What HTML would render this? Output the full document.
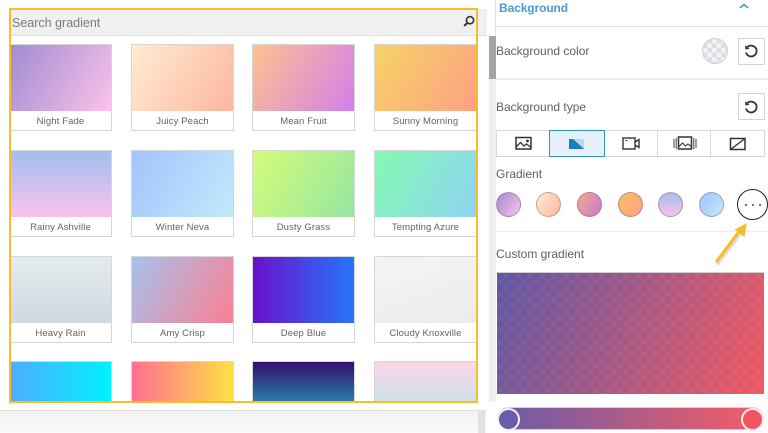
<!DOCTYPE html>
<html><head><meta charset="utf-8">
<style>
html,body{margin:0;padding:0;background:#fff}
body{width:768px;height:433px;position:relative;overflow:hidden;font-family:"Liberation Sans",sans-serif;color:#555}
.a{position:absolute}
.card{position:absolute;width:101px;height:85px;border:1px solid #d6d6d6;box-sizing:content-box;background:#fff}
.card .g{position:absolute;left:0;top:0;right:0;height:66px}
.card .l{position:absolute;left:0;right:0;top:66px;height:19px;line-height:21px;text-align:center;font-size:9.5px;letter-spacing:.12px;color:#636363}
.t{position:absolute;font-size:12px;color:#5f5f5f;letter-spacing:0;white-space:nowrap}
.dot{position:absolute;width:25px;height:25px;border-radius:50%;top:192px;box-sizing:border-box;border:1px solid rgba(120,100,110,.45)}
.rb{position:absolute;left:738px;width:27px;height:27px;box-sizing:border-box;border:1px solid #d4d4d4;background:#fff}
.tab{position:absolute;top:130px;height:27px;box-sizing:border-box}
</style></head><body>

<div class="a" style="left:10px;top:9px;width:477px;height:27px;background:#f0f0f0;border-bottom:1px solid #e2e2e2;box-sizing:border-box"></div>
<div class="a" style="left:12px;top:16px;font-size:12.5px;color:#7b7b7f">Search gradient</div>
<svg class="a" style="left:462px;top:14px" width="14" height="14" viewBox="0 0 14 14"><circle cx="8" cy="6.2" r="3.6" fill="none" stroke="#333" stroke-width="1.6"/><path d="M5.2 9L2.2 12" stroke="#333" stroke-width="2"/></svg>

<div class="card" style="left:9px;top:44px"><div class="g" style="background:linear-gradient(120deg,#a18cd1,#fbc2eb)"></div><div class="l">Night Fade</div></div>
<div class="card" style="left:131px;top:44px"><div class="g" style="background:linear-gradient(120deg,#ffecd2,#fcb69f)"></div><div class="l">Juicy Peach</div></div>
<div class="card" style="left:252px;top:44px"><div class="g" style="background:linear-gradient(120deg,#fcc28e,#d57eeb)"></div><div class="l">Mean Fruit</div></div>
<div class="card" style="left:374px;top:44px"><div class="g" style="background:linear-gradient(120deg,#f6d365,#fda085)"></div><div class="l">Sunny Morning</div></div>

<div class="card" style="left:9px;top:150px"><div class="g" style="background:linear-gradient(180deg,#a1bfef,#fbc2eb)"></div><div class="l">Rainy Ashville</div></div>
<div class="card" style="left:131px;top:150px"><div class="g" style="background:linear-gradient(120deg,#a1c4fd,#c2e9fb)"></div><div class="l">Winter Neva</div></div>
<div class="card" style="left:252px;top:150px"><div class="g" style="background:linear-gradient(120deg,#d4fc79,#96e6a1)"></div><div class="l">Dusty Grass</div></div>
<div class="card" style="left:374px;top:150px"><div class="g" style="background:linear-gradient(120deg,#84fab0,#8fd3f4)"></div><div class="l">Tempting Azure</div></div>

<div class="card" style="left:9px;top:256px"><div class="g" style="background:linear-gradient(180deg,#e4ebee,#cfd9df)"></div><div class="l">Heavy Rain</div></div>
<div class="card" style="left:131px;top:256px"><div class="g" style="background:linear-gradient(120deg,#a6c1ee,#fb8090)"></div><div class="l">Amy Crisp</div></div>
<div class="card" style="left:252px;top:256px"><div class="g" style="background:linear-gradient(90deg,#6a11cb,#2575fc)"></div><div class="l">Deep Blue</div></div>
<div class="card" style="left:374px;top:256px"><div class="g" style="background:linear-gradient(160deg,#f6f3f4,#ececec)"></div><div class="l">Cloudy Knoxville</div></div>

<div class="a" style="left:9px;top:361px;width:103px;height:42px;background:linear-gradient(90deg,#4facfe,#00f2fe);border:1px solid #d6d6d6;border-bottom:0;box-sizing:border-box"></div>
<div class="a" style="left:131px;top:361px;width:103px;height:42px;background:linear-gradient(90deg,#ff6f95,#fee140);border:1px solid #d6d6d6;border-bottom:0;box-sizing:border-box"></div>
<div class="a" style="left:252px;top:361px;width:103px;height:42px;background:linear-gradient(180deg,#30106e,#2b80a8);border:1px solid #d6d6d6;border-bottom:0;box-sizing:border-box"></div>
<div class="a" style="left:374px;top:361px;width:103px;height:42px;background:linear-gradient(180deg,#fdd6e6,#c9e2ea);border:1px solid #d6d6d6;border-bottom:0;box-sizing:border-box"></div>

<div class="a" style="left:478px;top:36px;width:11px;height:374px;background:#fff"></div>
<div class="a" style="left:9px;top:8px;width:469px;height:395px;border:2px solid #fbbc27;box-sizing:border-box"></div>

<div class="a" style="left:0;top:410px;width:486px;height:23px;background:linear-gradient(180deg,#f1f1f1,#fafafa);border-top:1px solid #dedede;box-sizing:border-box"></div>
<div class="a" style="left:478px;top:411px;width:7px;height:22px;background:#e2e2e2"></div>

<div class="a" style="left:495px;top:0;width:1px;height:36px;background:#e4e4e4"></div>
<div class="a" style="left:489px;top:36px;width:7px;height:366px;background:#efefef"></div>
<div class="a" style="left:489px;top:36px;width:7px;height:43px;background:#a4a4a4"></div>

<div class="t" style="left:499px;top:1px;font-weight:bold;color:#4a9bd0;letter-spacing:-.1px">Background</div>
<svg class="a" style="left:738px;top:2px" width="12" height="8" viewBox="0 0 12 8"><path d="M2 6L6 2.5L10 6" fill="none" stroke="#3d93cc" stroke-width="1.5"/></svg>
<div class="a" style="left:496px;top:26px;width:272px;height:1px;background:#e3e3e3"></div>

<div class="t" style="left:496px;top:44px">Background color</div>
<div class="a" style="left:702px;top:38px;width:26px;height:26px;border-radius:50%;border:1px solid #d0d0d0;box-sizing:border-box;background:repeating-conic-gradient(#dcdce2 0 25%,#f3f3f6 0 50%) 0 0/9px 9px"></div>
<div class="rb" style="top:38px"></div>
<svg class="a" style="left:743px;top:43px" width="16" height="16" viewBox="0 0 16 16"><path d="M3.6 5.2A5.4 5.4 0 1 1 3 9.5" fill="none" stroke="#333" stroke-width="1.8"/><path d="M2 2.3L2.6 6.6L6.6 5.7Z" fill="#333"/></svg>
<div class="a" style="left:496px;top:78px;width:272px;height:2px;background:#ececec"></div>

<div class="t" style="left:496px;top:100px">Background type</div>
<div class="rb" style="top:93px"></div>
<svg class="a" style="left:743px;top:99px" width="16" height="16" viewBox="0 0 16 16"><path d="M3.6 5.2A5.4 5.4 0 1 1 3 9.5" fill="none" stroke="#333" stroke-width="1.8"/><path d="M2 2.3L2.6 6.6L6.6 5.7Z" fill="#333"/></svg>

<div class="tab" style="left:496px;width:269px;border:1px solid #d8d8d8"></div>
<div class="a" style="left:657px;top:130px;width:1px;height:27px;background:#d8d8d8"></div>
<div class="a" style="left:710px;top:130px;width:1px;height:27px;background:#d8d8d8"></div>
<div class="a" style="left:604px;top:130px;width:1px;height:27px;background:#d8d8d8"></div>
<div class="tab" style="left:549px;width:56px;background:#e4f1f9;border:1px solid #3790c6"></div>

<svg class="a" style="left:515px;top:136px" width="18" height="15" viewBox="0 0 18 15"><rect x="1" y="1.5" width="15" height="11.5" fill="none" stroke="#333" stroke-width="1.5"/><path d="M1 11L5.5 6.5L9 10L11.5 8L16 11.5" fill="none" stroke="#333" stroke-width="1.3"/><circle cx="12.5" cy="5" r="1.4" fill="#333"/></svg>
<svg class="a" style="left:568px;top:138px" width="17" height="12" viewBox="0 0 17 12"><path d="M1 1H16V11H1Z" fill="#bcd8ea"/><path d="M1 1H5L16 11H1Z" fill="#1b7fbd"/></svg>
<svg class="a" style="left:622px;top:137px" width="18" height="13" viewBox="0 0 18 13"><rect x="1" y="1" width="12" height="11" fill="none" stroke="#333" stroke-width="1.4"/><path d="M13 5L17 2.5V10.5L13 8" fill="none" stroke="#333" stroke-width="1.4"/><path d="M3.5 3.5H5.5" stroke="#333"/></svg>
<svg class="a" style="left:673px;top:135px" width="24" height="17" viewBox="0 0 24 17"><rect x="5.5" y="2" width="13" height="12" fill="none" stroke="#333" stroke-width="1.5"/><path d="M5.5 12L9.5 8L12.5 11L15 9L18.5 12" fill="none" stroke="#333" stroke-width="1.1"/><path d="M1 4V13M3.2 3V14M20.8 3V14M23 4V13" stroke="#555" stroke-width="1.1"/></svg>
<svg class="a" style="left:729px;top:137px" width="18" height="14" viewBox="0 0 18 14"><rect x="1.5" y="1.5" width="14.5" height="11" fill="none" stroke="#333" stroke-width="1.5"/><path d="M1.5 12.5L16 1.5" stroke="#333" stroke-width="1.4"/></svg>

<div class="t" style="left:496px;top:167px">Gradient</div>
<div class="dot" style="left:496px;background:linear-gradient(120deg,#a18cd1,#fbc2eb)"></div>
<div class="dot" style="left:536px;background:linear-gradient(120deg,#ffecd2,#fcb69f)"></div>
<div class="dot" style="left:577px;background:linear-gradient(120deg,#f5a98c,#cb78d0)"></div>
<div class="dot" style="left:618px;background:linear-gradient(120deg,#f6c065,#fda085)"></div>
<div class="dot" style="left:658px;background:linear-gradient(180deg,#a1bfef,#fbc2eb)"></div>
<div class="dot" style="left:699px;background:linear-gradient(120deg,#a1c4fd,#c2e9fb)"></div>
<div class="a" style="left:737px;top:189px;width:31px;height:31px;border-radius:50%;border:1.5px solid #222;box-sizing:border-box;background:#fff"></div>
<div class="a" style="left:745px;top:204px;width:2px;height:2px;border-radius:50%;background:#444;box-shadow:7px 0 0 #444,14px 0 0 #444"></div>

<div class="a" style="left:496px;top:231px;width:272px;height:1px;background:#ececec"></div>
<div class="t" style="left:496px;top:247px">Custom gradient</div>

<div class="a" style="left:497px;top:272px;width:267px;height:122px;background:repeating-conic-gradient(rgba(255,255,255,.025) 0 25%,rgba(0,0,0,.018) 0 50%) 0 0/12px 12px,linear-gradient(112deg,#6259a6,#f35a63);border-top:1px solid #cfcfcf;box-sizing:border-box"></div>

<div class="a" style="left:497px;top:407px;width:267px;height:23px;border-radius:12px;background:linear-gradient(90deg,#6a5ca8,#f55c66);border:1px solid #d8d2de;box-sizing:border-box"></div>
<div class="a" style="left:497px;top:408px;width:23px;height:23px;border-radius:50%;background:#6a5ca8;border:2.5px solid #f3f0f6;box-sizing:border-box"></div>
<div class="a" style="left:741px;top:408px;width:23px;height:23px;border-radius:50%;background:#f2555f;border:2.5px solid #f8eeee;box-sizing:border-box"></div>

<svg class="a" style="left:708px;top:216px" width="48" height="54" viewBox="0 0 48 54"><path d="M9 45L30 17" stroke="#bbb" stroke-width="4" opacity=".5" stroke-linecap="round" transform="translate(1 2)"/><path d="M9 45L30 17" stroke="#f5bd2f" stroke-width="3.2" stroke-linecap="round"/><path d="M39 7L36.5 21L26.5 13.5Z" fill="#f5bd2f"/></svg>

</body></html>
